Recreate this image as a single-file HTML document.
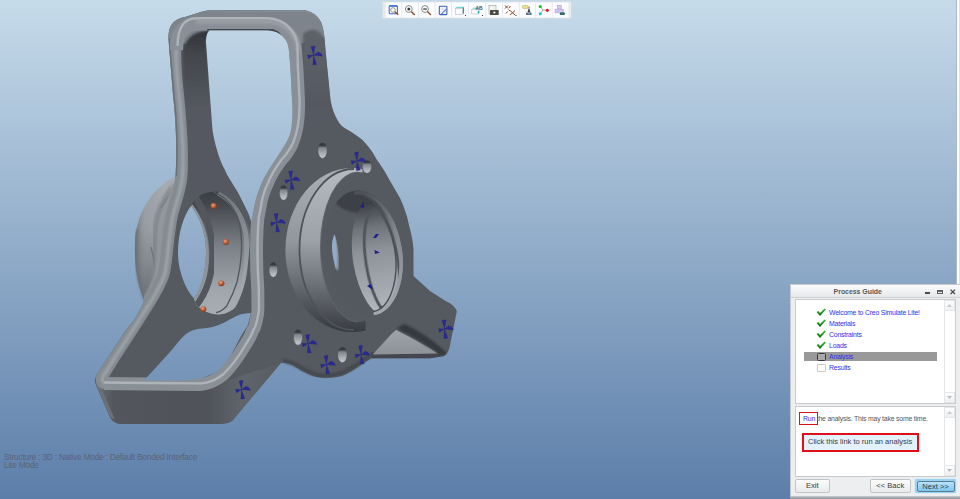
<!DOCTYPE html>
<html><head><meta charset="utf-8">
<style>
html,body{margin:0;padding:0;width:960px;height:499px;overflow:hidden;}
body{position:relative;background:linear-gradient(to bottom,#c6dbea 0%,#91acc9 50%,#5c7ea9 100%);font-family:"Liberation Sans",sans-serif;}
.a{position:absolute;}
#model{position:absolute;left:0;top:0;}
/* toolbar */
#tb{left:383px;top:2px;width:188px;height:16px;background:#f4f6f8;border:1px solid #d8dde2;box-sizing:border-box;}
.tsep{position:absolute;top:1px;width:1px;height:14px;background:#dfe3e7;}
/* status */
.st{color:#5b6478;font-size:8.4px;line-height:8px;left:4px;letter-spacing:-0.22px;}
/* dialog */
#dlg{left:790px;top:284px;width:171px;height:213px;background:#eceef0;border:1px solid #c4c8cc;box-sizing:border-box;}
#title{left:791px;top:285px;width:169px;height:12px;background:linear-gradient(#fbfbfb,#e6e8ea);border-bottom:1px solid #cfd2d5;}
.pnl{background:#fff;border:1px solid #c9cccf;box-sizing:border-box;}
.sb{background:#fff;border-left:1px solid #e3e5e7;box-sizing:border-box;}
.sbb{background:linear-gradient(#fdfdfd,#eef0f2);border:1px solid #e4e6e8;box-sizing:border-box;}
.lnk{color:#2f2ff0;font-size:6.9px;line-height:9px;white-space:nowrap;letter-spacing:-0.2px;}
.btn{border:1px solid #c2c5c8;border-radius:2px;background:linear-gradient(#fbfbfb,#e8eaec);box-sizing:border-box;font-size:7.6px;color:#3a3a3a;text-align:center;line-height:12px;}
</style></head>
<body>
<svg id="model" width="960" height="499" viewBox="0 0 960 499">
<!-- MODEL -->
<defs>
<linearGradient id="bgg" gradientUnits="userSpaceOnUse" x1="0" y1="0" x2="0" y2="499">
<stop offset="0" stop-color="#c6dbea"/><stop offset="0.5" stop-color="#91acc9"/><stop offset="1" stop-color="#5c7ea9"/></linearGradient>
<linearGradient id="hub" gradientUnits="userSpaceOnUse" x1="0" y1="177" x2="0" y2="306">
<stop offset="0" stop-color="#a6acb2"/><stop offset="0.4" stop-color="#9ea4aa"/><stop offset="0.68" stop-color="#83888e"/><stop offset="1" stop-color="#5c6167"/></linearGradient>
<linearGradient id="hubx" gradientUnits="userSpaceOnUse" x1="134" y1="0" x2="165" y2="0">
<stop offset="0" stop-color="#5f646a" stop-opacity="0.8"/><stop offset="0.35" stop-color="#80858b" stop-opacity="0.25"/><stop offset="1" stop-color="#80858b" stop-opacity="0"/></linearGradient>
<linearGradient id="topband" gradientUnits="userSpaceOnUse" x1="0" y1="16.5" x2="0" y2="31">
<stop offset="0" stop-color="#9aa1a8"/><stop offset="0.17" stop-color="#a9b0b7"/><stop offset="0.45" stop-color="#9097a0"/><stop offset="0.78" stop-color="#7b8189"/><stop offset="0.9" stop-color="#474a50"/><stop offset="1" stop-color="#3d4045"/></linearGradient>
<linearGradient id="lbore" gradientUnits="userSpaceOnUse" x1="0" y1="192" x2="0" y2="315">
<stop offset="0" stop-color="#3a3d42"/><stop offset="0.1" stop-color="#44474c"/><stop offset="0.43" stop-color="#7a7f85"/><stop offset="0.8" stop-color="#a0a6ac"/><stop offset="1" stop-color="#a8aeb4"/></linearGradient>
<linearGradient id="b1" gradientUnits="userSpaceOnUse" x1="0" y1="168" x2="0" y2="334">
<stop offset="0" stop-color="#a9afb5"/><stop offset="0.45" stop-color="#90969c"/><stop offset="0.72" stop-color="#62676d"/><stop offset="1" stop-color="#34373c"/></linearGradient>
<linearGradient id="b2" gradientUnits="userSpaceOnUse" x1="0" y1="168" x2="0" y2="330">
<stop offset="0" stop-color="#b5bbc1"/><stop offset="0.45" stop-color="#9ba1a7"/><stop offset="0.72" stop-color="#6c7177"/><stop offset="1" stop-color="#3a3d42"/></linearGradient>
<linearGradient id="rbore" x1="0" y1="0" x2="0" y2="1">
<stop offset="0" stop-color="#3a3d42"/><stop offset="0.22" stop-color="#6f747a"/><stop offset="0.42" stop-color="#8c9298"/><stop offset="1" stop-color="#b5bbc1"/></linearGradient>
<linearGradient id="tri" gradientUnits="userSpaceOnUse" x1="0" y1="330" x2="0" y2="352">
<stop offset="0" stop-color="#9ea4aa"/><stop offset="1" stop-color="#8e949a"/></linearGradient>
<linearGradient id="front" gradientUnits="userSpaceOnUse" x1="95" y1="0" x2="280" y2="0">
<stop offset="0" stop-color="#6b7076"/><stop offset="0.1" stop-color="#53575d"/><stop offset="0.6" stop-color="#4f5359"/><stop offset="0.8" stop-color="#60656b"/><stop offset="1" stop-color="#585c62"/></linearGradient>
<linearGradient id="holeg" x1="0" y1="0" x2="0" y2="1">
<stop offset="0" stop-color="#2f3236"/><stop offset="0.18" stop-color="#3a3d42"/><stop offset="0.32" stop-color="#80858b"/><stop offset="0.7" stop-color="#aab0b5"/><stop offset="1" stop-color="#c5cacf"/></linearGradient>
<radialGradient id="dot" cx="0.4" cy="0.35" r="0.65">
<stop offset="0" stop-color="#eea27a"/><stop offset="0.5" stop-color="#c2643a"/><stop offset="1" stop-color="#7e3a1e"/></radialGradient>
<clipPath id="sil2"><path d="M207,10.5 C209,10.2 210,10 212,10 L302.5,10 C310,10.5 317,14 321,22 C323,27 324,32 324.5,38 L325.7,52 L330.5,100 C332,108 334,114 337.5,120 C340,125 344,128 348,130 C353,133 358,136 362.5,140 C369,147 373,152 377,160 C382,167 386,173 389.5,180 L400,198 C404,207 407,215 409,225 C411,233 413,241 413.5,249 L413.5,276 L430,291 L444,300 C450,303 455,306 456.8,311.2 L449.8,346.3 C448.5,352 446.5,355 444,356 L430,358.2 L371.2,358.2 C366,362 362,364 358.75,366.25 C352,371 346,375 340,376.25 C333,378 327,378.5 321.25,378.1 C314,377 308,374 302.5,371.25 C297,368 293,364.5 290,363.75 C287,363 284,362.8 281.25,362.5 L235,417.5 C232,422 228,424 217,424 L122,424 C116,424 112,421 110,417 L96,385 C94.5,381 95,378 97,374.5 L106.2,360 L126,330 C130,325 132,322 134.4,320 C138,314 141,307 144.7,301 C150,294 157,285 162,276 C165,265 166,255 166.5,250 C167,235 168,225 170,218 C173,200 175,190 175.5,177 C177,150 176,120 173,95 L168.4,38.75 C168.5,30 170,25 175,21 C178,19 181,17.5 185,17 C192,15 200,12 207,10.5 Z"/><path d="M178,176 C170,179 165,182 161,186 C155,191 152,195 148.4,200.5 C144,207 141,213 139.4,218.5 C137,226 135,233 135,242 C134.5,257 135.5,270 138,281 C140,290 143,298 147,306 L185,306 L185,176 Z"/></clipPath><clipPath id="sil"><path d="M207,10.5 C209,10.2 210,10 212,10 L302.5,10 C310,10.5 317,14 321,22 C323,27 324,32 324.5,38 L325.7,52 L330.5,100 C332,108 334,114 337.5,120 C340,125 344,128 348,130 C353,133 358,136 362.5,140 C369,147 373,152 377,160 C382,167 386,173 389.5,180 L400,198 C404,207 407,215 409,225 C411,233 413,241 413.5,249 L413.5,276 L430,291 L444,300 C450,303 455,306 456.8,311.2 L449.8,346.3 C448.5,352 446.5,355 444,356 L430,358.2 L371.2,358.2 C366,362 362,364 358.75,366.25 C352,371 346,375 340,376.25 C333,378 327,378.5 321.25,378.1 C314,377 308,374 302.5,371.25 C297,368 293,364.5 290,363.75 C287,363 284,362.8 281.25,362.5 L235,417.5 C232,422 228,424 217,424 L122,424 C116,424 112,421 110,417 L96,385 C94.5,381 95,378 97,374.5 L106.2,360 L126,330 C130,325 132,322 134.4,320 C138,314 141,307 144.7,301 C150,294 157,285 162,276 C165,265 166,255 166.5,250 C167,235 168,225 170,218 C173,200 175,190 175.5,177 C177,150 176,120 173,95 L168.4,38.75 C168.5,30 170,25 175,21 C178,19 181,17.5 185,17 C192,15 200,12 207,10.5 Z"/></clipPath>
<filter id="soft" x="-5%" y="-5%" width="110%" height="110%"><feGaussianBlur stdDeviation="1.1"/></filter>
<filter id="soft2" x="-5%" y="-5%" width="110%" height="110%"><feGaussianBlur stdDeviation="0.6"/></filter>
</defs>
<path fill="url(#hub)" d="M178,176 C170,179 165,182 161,186 C155,191 152,195 148.4,200.5 C144,207 141,213 139.4,218.5 C137,226 135,233 135,242 C134.5,257 135.5,270 138,281 C140,290 143,298 147,306 L185,306 L185,176 Z"/>
<path fill="url(#hubx)" d="M178,176 C170,179 165,182 161,186 C155,191 152,195 148.4,200.5 C144,207 141,213 139.4,218.5 C137,226 135,233 135,242 C134.5,257 135.5,270 138,281 C140,290 143,298 147,306 L185,306 L185,176 Z"/>
<path fill="none" stroke="#7c8187" stroke-width="6" filter="url(#soft)" d="M172,188 C165,198 158,210 156,225 C154,240 154,255 157,270 C159,280 160,288 158,296" opacity="0.7"/>
<path fill="none" stroke="#6f747a" stroke-width="1.3" filter="url(#soft2)" d="M151,247 C153,256 155,265 157,275"/>
<path fill="none" stroke="#72777d" stroke-width="1.3" filter="url(#soft2)" d="M175,186 C170,194 166,200 161,208"/>
<path fill="none" stroke="#6a6f75" stroke-width="3" filter="url(#soft)" d="M137,230 C135,250 136,268 140,285 C142,293 144,299 147,305" opacity="0.6"/>
<path fill="#555960" d="M207,10.5 C209,10.2 210,10 212,10 L302.5,10 C310,10.5 317,14 321,22 C323,27 324,32 324.5,38 L325.7,52 L330.5,100 C332,108 334,114 337.5,120 C340,125 344,128 348,130 C353,133 358,136 362.5,140 C369,147 373,152 377,160 C382,167 386,173 389.5,180 L400,198 C404,207 407,215 409,225 C411,233 413,241 413.5,249 L413.5,276 L430,291 L444,300 C450,303 455,306 456.8,311.2 L449.8,346.3 C448.5,352 446.5,355 444,356 L430,358.2 L371.2,358.2 C366,362 362,364 358.75,366.25 C352,371 346,375 340,376.25 C333,378 327,378.5 321.25,378.1 C314,377 308,374 302.5,371.25 C297,368 293,364.5 290,363.75 C287,363 284,362.8 281.25,362.5 L235,417.5 C232,422 228,424 217,424 L122,424 C116,424 112,421 110,417 L96,385 C94.5,381 95,378 97,374.5 L106.2,360 L126,330 C130,325 132,322 134.4,320 C138,314 141,307 144.7,301 C150,294 157,285 162,276 C165,265 166,255 166.5,250 C167,235 168,225 170,218 C173,200 175,190 175.5,177 C177,150 176,120 173,95 L168.4,38.75 C168.5,30 170,25 175,21 C178,19 181,17.5 185,17 C192,15 200,12 207,10.5 Z"/>
<g clip-path="url(#sil)">
<path fill="#7d848c" d="M168.4,38.75 C168.5,30 170,25 175,21 C178,19 181,17.5 185,17 C192,15 200,12 207,10.5 L302.5,10 C310,10.5 317,14 321,22 C323,27 324,32 324.5,38 L300,44 L186,44 Z"/>
<path fill="none" stroke="#8a9199" stroke-width="1.2" d="M207,11 L302,11 C310,11.5 316,15 319,20"/>
<linearGradient id="rfg" gradientUnits="userSpaceOnUse" x1="0" y1="30" x2="0" y2="105"><stop offset="0" stop-color="#5e636a"/><stop offset="1" stop-color="#555960"/></linearGradient>
<path fill="url(#rfg)" filter="url(#soft)" d="M303,34 C312,26 321,30 324.5,40 L331,106 L303,106 Z"/>
<linearGradient id="wallg" gradientUnits="userSpaceOnUse" x1="0" y1="30" x2="0" y2="110"><stop offset="0" stop-color="#303338"/><stop offset="0.3" stop-color="#43464c"/><stop offset="1" stop-color="#555960"/></linearGradient>
<path fill="url(#wallg)" filter="url(#soft)" d="M183,56 C183,40 192,31 209.7,30.5 L206,42.5 L209.5,90 L212.5,130 L217,150 L225,170 L238,192.5 L187,195 Z"/>
<path fill="url(#front)" d="M95,382 L100,387.5 L197.5,390 L222.5,382.5 L250,373 L283,362 L290,362 L237,422 Q230,426 217,426 L122,426 Q112,425 108,417 Z"/>
<path fill="#6a6f75" filter="url(#soft2)" d="M95,382 L101,387 L115,420 L110,417 Z"/>
</g>
<path fill="none" stroke="#8f959b" stroke-width="10" filter="url(#soft)" d="M177,184 C174,198 168,210 165.5,222 C163.5,234 162.5,244 161.5,252 C160.5,264 159.5,272 157.5,280 C154.5,288 150.5,296 146,303" clip-path="url(#sil2)"/>
<path fill="none" stroke="#858b92" stroke-width="12" stroke-linejoin="round" filter="url(#soft2)" d="M200,23 C186,23 176.5,29 175.3,45 C174.8,60 175.5,75 178,95 C180,115 182,140 182,160 C182,170 181.5,176 181,180 C179,195 173,208 171,220 C169,232 168,242 167,250 C166,262 165,270 163,276 C160,284 155,293 150.7,300 L131.75,330 L112.2,360 L103,375 C100.5,380 101.5,383 106,383.5" clip-path="url(#sil2)"/>
<path fill="none" stroke="#9ea4aa" stroke-width="3.2" stroke-linejoin="round" filter="url(#soft)" d="M200,23 C186,23 176.5,29 175.3,45 C174.8,60 175.5,75 178,95 C180,115 182,140 182,160 C182,170 181.5,176 181,180 C179,195 173,208 171,220 C169,232 168,242 167,250 C166,262 165,270 163,276 C160,284 155,293 150.7,300 L131.75,330 L112.2,360 L103,375 C100.5,380 101.5,383 106,383.5" transform="translate(1,0)" clip-path="url(#sil2)"/>
<path fill="none" stroke="#6b7077" stroke-width="1.6" filter="url(#soft2)" d="M169.2,40 L173.8,95 C176.8,120 177.8,150 176.3,176" clip-path="url(#sil2)"/>
<g clip-path="url(#sil)">
<path fill="none" stroke="#898f96" stroke-width="13" stroke-linejoin="round" d="M176.5,50 C176.5,33 184,24 200,24 L268,24 A27.5,27.5 0 0 1 295.5,51.5 L296.9,68 L298.5,100 C299,115 297,132 292,144 C288,152 284,157 281,160 C275,168 270,176 267.5,183 C263,192 261,199 260,207 C258,215 257,220 257,230 C256,250 256.5,270 257.8,290 C258,305 258,312 257.7,313 C256,322 254.5,329 252.9,330 C250,338 247,342 245,345 C238,357 232,366 222.5,375 C215,381 208,384 200,384.4 L150,384 L104,383.5" filter="url(#soft2)"/>
<path fill="none" stroke="#979da5" stroke-width="5" d="M196,21.50 L268,21.50 A30.00,30.00 0 0 1 298.00,51.5" filter="url(#soft)"/>
<path fill="none" stroke="#adb3b9" stroke-width="2.4" stroke-linejoin="round" d="M177.5,46 C177.5,30 183,18.3 196,18.3 L268,18.3 A30.2,30.2 0 0 1 297.5,50 L297.9,67 L299.5,99 C300,114 298,131 293,143 C289,151 285,156 282,159 C276,167 271,175 268.5,182 C264,191 262,198 261,206 C259,214 258,219 258,229 C257,249 257.5,269 258.8,289 C259,304 259,311 258.7,312 C257,321 255.5,328 253.9,329 C251,337 248,341 246,344 C239,356 233,365 223.5,374 C216,380 209,383 201,383.4 L150,383 L104,382.5" filter="url(#soft2)"/>
<path fill="none" stroke="#43464b" stroke-width="2.6" d="M207,29.3 L266,29.3 C272,29.5 277,31.5 280,35" filter="url(#soft2)"/>
</g>
<path fill="url(#bgg)" d="M209.7,30.5 L268,30.5 A21,21 0 0 1 289,51.5 L290.4,68 L292,100 C292.5,110 292.5,120 291,130 C290,134 289,137 287.5,140 C283,148 279,154 275,160 C270,168 265,175 261.3,183.4 C258,191 255.5,199 254,207 C253,212 252,217 251.2,222 C250,218 249,214 247,210.5 L238,192.5 L229,178 C227,175 226,172.5 225,170 C221,163 219,157 217,150 C215,143 213.5,137 212.5,130 L209.5,90 L206,42.5 C206,37 207,32 209.7,30.5 Z"/>
<path fill="url(#lbore)" d="M191,206 C192,203 194,201 195.8,199.4 C200,195 205,192.5 209,192.2 L216.3,191.6 C222,192 228,197 233.1,201.8 C240,208 245,215 247.6,223.5 C249.5,229 250.6,235 250.4,240 C250,246 249.5,249 249,252 C248.5,258 248,264 247.2,270 C246,282 241,298 235.2,307.3 C231,312 224,314.5 218.3,314.5 C210,314.5 201,310 196,305 L194,298.5 C201,288 206,272 206,252 C206,232 199,216 191,206 Z"/>
<clipPath id="lbc"><path d="M191,206 C192,203 194,201 195.8,199.4 C200,195 205,192.5 209,192.2 L216.3,191.6 C222,192 228,197 233.1,201.8 C240,208 245,215 247.6,223.5 C249.5,229 250.6,235 250.4,240 C250,246 249.5,249 249,252 C248.5,258 248,264 247.2,270 C246,282 241,298 235.2,307.3 C231,312 224,314.5 218.3,314.5 C210,314.5 201,310 196,305 L194,298.5 C201,288 206,272 206,252 C206,232 199,216 191,206 Z"/></clipPath>
<g clip-path="url(#lbc)">
<path fill="none" stroke="#a3a9af" stroke-width="5" filter="url(#soft2)" d="M218,193 C232,200 243,215 246,235 C248,255 246,285 238,302 C233,310 226,314 218,315" opacity="0.55"/>
<path fill="none" stroke="#53575d" stroke-width="6.5" filter="url(#soft2)" d="M195,197 C205,211 212,231 212.5,251 C213,272 207,292 196,306"/>
<path fill="none" stroke="#8d9399" stroke-width="2.2" d="M191.5,205 C199.8,216 207.2,232 207.2,252 C207.2,272 202,289 195,299.5"/>
<path fill="none" stroke="#52565c" stroke-width="1.3" d="M212.7,191.6 C220,195 225,198 227,200.6 C233,207 236,212 238,218.7 C240.5,227 241.6,236 241.6,245 C241.6,258 240,270 237,282 C234,292 230,300 226.7,306 C223,310 220,312 216,312.7"/>
</g>
<path fill="url(#bgg)" d="M191,206 C199,216 206,232 206,252 C206,272 201,288 194,298.5 C186,290 178,272 178,253 C178,232 184,215 191,206 Z"/>
<path fill="url(#bgg)" d="M144,380.4 L180,380.4 C190,380 197,379 202,378 C208,376 213,374 217.5,371.6 C223,366 227,361 231,355 L238.8,340.3 C242,334 245,330 247.3,326.3 C249,321 250.5,316 250.8,313 C246,313 242,314 238.8,315 C234,317 231,319 227.6,320.7 C223,323 219,325 215,326.3 C210,328 206,328 202,328.6 C196,329 190,331 186,334 C180,339 176,345 170,352 Z"/>
<clipPath id="bossc"><path d="M250,140 L362,140 L366,345 L250,345 Z"/></clipPath>
<g clip-path="url(#bossc)">
<path fill="url(#b1)" fill-rule="evenodd" d="M352,168 A66.6,82 0 1 0 352,332 A66.6,82 0 1 0 352,168 Z M354,169 A54.5,80.5 0 1 0 354,330 A54.5,80.5 0 1 0 354,169 Z"/>
<path fill="url(#b2)" fill-rule="evenodd" d="M354,169 A54.5,80.5 0 1 0 354,330 A54.5,80.5 0 1 0 354,169 Z M358,172 A37.5,75 0 1 0 358,322 A37.5,75 0 1 0 358,172 Z"/>
<path fill="none" stroke="#4f5359" stroke-width="1.8" d="M354,169 A54.5,80.5 0 0 0 354,330"/>
<path fill="none" stroke="#60656b" stroke-width="1" d="M358,172 A37.5,75 0 0 0 358,322"/>
</g>
<clipPath id="e1c"><ellipse cx="0" cy="0" rx="38" ry="63" transform="translate(364,253) rotate(-9)"/></clipPath>
<ellipse cx="0" cy="0" rx="38" ry="63" transform="translate(364,253) rotate(-9)" fill="#54585f"/>
<g clip-path="url(#e1c)">
<ellipse cx="368" cy="198" rx="34" ry="16" fill="#3e4146" filter="url(#soft)"/>
<ellipse cx="0" cy="0" rx="26" ry="58" transform="translate(379,259) rotate(-9)" fill="url(#rbore)"/>
<ellipse cx="0" cy="0" rx="16" ry="52" transform="translate(382,262) rotate(-9)" fill="none" stroke="#50545a" stroke-width="2.8" filter="url(#soft2)"/>
<linearGradient id="rimg" gradientUnits="userSpaceOnUse" x1="0" y1="190" x2="0" y2="316"><stop offset="0" stop-color="#4a4e54"/><stop offset="0.35" stop-color="#80868c"/><stop offset="1" stop-color="#a2a8ae"/></linearGradient>
<path fill="none" stroke="url(#rimg)" stroke-width="7" d="M364,190 A38,63 0 0 1 364,316" transform="rotate(-9 364 253)"/>
<path fill="none" stroke="#4a4e54" stroke-width="1.4" d="M363.5,193.5 A31.5,59.5 0 0 1 363.5,312.5" transform="rotate(-9 363.5 253)"/>
</g>
<path fill="#8d9399" d="M334.8,234.4 C338,244 339.6,258 338.2,271.3 C335,264 332,252 332.2,246 C332.5,240 333.5,237 334.8,234.4 Z"/>
<path fill="url(#bgg)" d="M334.6,234.4 C336.8,244 337.2,258 336.5,271.3 C334,264 331.8,252 332,246 C332.3,240 333.3,237 334.6,234.4 Z"/>
<path fill="#44474d" d="M371.2,352 L440,352 L446,352 L444,356 L430,358.2 L371.2,358.2 Z"/>
<path fill="url(#tri)" d="M396.5,330 C394.5,331 393,332.5 391,334.5 L372.6,354.5 L438,353.5 C425,345 408,336 396.5,330 Z"/>
<path fill="#36393e" filter="url(#soft)" d="M397,328.5 C412,336 428,346 440,354 L447,353.5 C437,343 420,331 404,324 Z"/>
<path fill="none" stroke="#44484e" stroke-width="4" filter="url(#soft)" d="M283,360.5 C287,361 292,362 302.5,368.5 C308,371.5 314,374.5 321.25,375.5 C327,376 333,375.5 340,373.5 C346,371.5 352,368 358.75,363.5 C362,361 366,358 371,355"/>
<ellipse cx="322.5" cy="150.6" rx="4.65" ry="7.8" fill="url(#holeg)" stroke="#4a4e54" stroke-width="0.5"/>
<ellipse cx="367" cy="166.7" rx="4.65" ry="6.5" fill="url(#holeg)" stroke="#4a4e54" stroke-width="0.5"/>
<ellipse cx="283.6" cy="192.8" rx="4.3" ry="7.5" fill="url(#holeg)" stroke="#4a4e54" stroke-width="0.5"/>
<ellipse cx="273.3" cy="269.8" rx="4.3" ry="7.5" fill="url(#holeg)" stroke="#4a4e54" stroke-width="0.5"/>
<ellipse cx="298" cy="337.4" rx="4.5" ry="7.8" fill="url(#holeg)" stroke="#4a4e54" stroke-width="0.5"/>
<ellipse cx="342.4" cy="354.8" rx="4.7" ry="7.85" fill="url(#holeg)" stroke="#4a4e54" stroke-width="0.5"/>
<ellipse cx="213.7" cy="206" rx="3.1" ry="2.9" fill="url(#dot)"/>
<ellipse cx="225.8" cy="242" rx="3.1" ry="2.9" fill="url(#dot)"/>
<ellipse cx="221.3" cy="283.3" rx="3.1" ry="2.9" fill="url(#dot)"/>
<ellipse cx="203.3" cy="309.1" rx="3.1" ry="2.9" fill="url(#dot)"/>
<g transform="translate(313.5,55.3) rotate(0) scale(1.0)" fill="#2a2a92" stroke="#1c1b6a" stroke-width="0.2"><path d="M0,0 L-2.5,-8.6 L1.6,-9.2 Z"/><path d="M0,0 L4.4,-3.2 Q7.8,-2.6 9,1.0 Z"/><path d="M0,0 L-0.7,9.6 L3.3,9.2 Z"/><path d="M0,0 L-5.9,-0.3 L-5.2,3.4 Z"/></g>
<g transform="translate(357,161) rotate(0) scale(1.0)" fill="#2a2a92" stroke="#1c1b6a" stroke-width="0.2"><path d="M0,0 L-2.5,-8.6 L1.6,-9.2 Z"/><path d="M0,0 L4.4,-3.2 Q7.8,-2.6 9,1.0 Z"/><path d="M0,0 L-0.7,9.6 L3.3,9.2 Z"/><path d="M0,0 L-5.9,-0.3 L-5.2,3.4 Z"/></g>
<g transform="translate(291,180) rotate(0) scale(1.0)" fill="#2a2a92" stroke="#1c1b6a" stroke-width="0.2"><path d="M0,0 L-2.5,-8.6 L1.6,-9.2 Z"/><path d="M0,0 L4.4,-3.2 Q7.8,-2.6 9,1.0 Z"/><path d="M0,0 L-0.7,9.6 L3.3,9.2 Z"/><path d="M0,0 L-5.9,-0.3 L-5.2,3.4 Z"/></g>
<g transform="translate(276.5,222.5) rotate(0) scale(1.0)" fill="#2a2a92" stroke="#1c1b6a" stroke-width="0.2"><path d="M0,0 L-2.5,-8.6 L1.6,-9.2 Z"/><path d="M0,0 L4.4,-3.2 Q7.8,-2.6 9,1.0 Z"/><path d="M0,0 L-0.7,9.6 L3.3,9.2 Z"/><path d="M0,0 L-5.9,-0.3 L-5.2,3.4 Z"/></g>
<g transform="translate(308,343.5) rotate(0) scale(1.0)" fill="#2a2a92" stroke="#1c1b6a" stroke-width="0.2"><path d="M0,0 L-2.5,-8.6 L1.6,-9.2 Z"/><path d="M0,0 L4.4,-3.2 Q7.8,-2.6 9,1.0 Z"/><path d="M0,0 L-0.7,9.6 L3.3,9.2 Z"/><path d="M0,0 L-5.9,-0.3 L-5.2,3.4 Z"/></g>
<g transform="translate(326.5,364.5) rotate(0) scale(1.0)" fill="#2a2a92" stroke="#1c1b6a" stroke-width="0.2"><path d="M0,0 L-2.5,-8.6 L1.6,-9.2 Z"/><path d="M0,0 L4.4,-3.2 Q7.8,-2.6 9,1.0 Z"/><path d="M0,0 L-0.7,9.6 L3.3,9.2 Z"/><path d="M0,0 L-5.9,-0.3 L-5.2,3.4 Z"/></g>
<g transform="translate(361,354.5) rotate(0) scale(1.0)" fill="#2a2a92" stroke="#1c1b6a" stroke-width="0.2"><path d="M0,0 L-2.5,-8.6 L1.6,-9.2 Z"/><path d="M0,0 L4.4,-3.2 Q7.8,-2.6 9,1.0 Z"/><path d="M0,0 L-0.7,9.6 L3.3,9.2 Z"/><path d="M0,0 L-5.9,-0.3 L-5.2,3.4 Z"/></g>
<g transform="translate(444.5,329) rotate(0) scale(1.0)" fill="#2a2a92" stroke="#1c1b6a" stroke-width="0.2"><path d="M0,0 L-2.5,-8.6 L1.6,-9.2 Z"/><path d="M0,0 L4.4,-3.2 Q7.8,-2.6 9,1.0 Z"/><path d="M0,0 L-0.7,9.6 L3.3,9.2 Z"/><path d="M0,0 L-5.9,-0.3 L-5.2,3.4 Z"/></g>
<g transform="translate(241.5,389.5) rotate(0) scale(1.0)" fill="#2a2a92" stroke="#1c1b6a" stroke-width="0.2"><path d="M0,0 L-2.5,-8.6 L1.6,-9.2 Z"/><path d="M0,0 L4.4,-3.2 Q7.8,-2.6 9,1.0 Z"/><path d="M0,0 L-0.7,9.6 L3.3,9.2 Z"/><path d="M0,0 L-5.9,-0.3 L-5.2,3.4 Z"/></g>
<g fill="#1f1f8a"><path d="M360,207 L364,202 L364,208 Z"/><path d="M373,238 L376,234 L379,234 L376,238 Z"/><path d="M374.5,250 L380,252.5 L375,254 Z"/><path d="M367,286 L371,284 L373,290 Z"/></g>
</svg>

<!-- toolbar -->
<svg class="a" style="left:0;top:0;" width="580" height="22" viewBox="0 0 580 22">
<rect x="382.5" y="1.9" width="188.5" height="16.2" fill="#fbfcfd" stroke="#d5dce4" stroke-width="0.8"/>
<rect x="383" y="2.3" width="2.8" height="15.4" fill="#e6e9ec"/>
<g fill="#e3e7eb">
<rect x="401.3" y="2.5" width="0.9" height="15"/><rect x="418" y="2.5" width="0.9" height="15"/><rect x="434.6" y="2.5" width="0.9" height="15"/>
<rect x="451.1" y="2.5" width="0.9" height="15"/><rect x="468.2" y="2.5" width="0.9" height="15"/><rect x="485.2" y="2.5" width="0.9" height="15"/>
<rect x="502" y="2.5" width="0.9" height="15"/><rect x="518.8" y="2.5" width="0.9" height="15"/><rect x="535.2" y="2.5" width="0.9" height="15"/>
<rect x="551.7" y="2.5" width="0.9" height="15"/><rect x="568.5" y="2.5" width="1.4" height="15"/>
</g>
<!-- 1 refit -->
<rect x="389.2" y="5.7" width="8.2" height="8" rx="1" fill="#fff" stroke="#3f6fcf" stroke-width="1.1"/>
<rect x="389.2" y="5.4" width="8.2" height="1.4" fill="#3f6fcf"/>
<circle cx="393" cy="10" r="2.3" fill="none" stroke="#8a8a80" stroke-width="0.9"/>
<path d="M394.8,11.8 L398.3,14.8" stroke="#8b4a2a" stroke-width="1.4"/>
<!-- 2 zoom in -->
<circle cx="408.8" cy="9" r="3.4" fill="#fff" stroke="#6a6a6a" stroke-width="0.8"/>
<circle cx="408.8" cy="9" r="1.5" fill="#3a3a3a"/>
<path d="M411.2,11.5 L414.7,14.9" stroke="#8b4a2a" stroke-width="1.4"/>
<!-- 3 zoom out -->
<circle cx="425" cy="9" r="3.4" fill="#fff" stroke="#6a6a6a" stroke-width="0.8"/>
<rect x="423.2" y="8.4" width="3.6" height="1.3" fill="#3a3a3a"/>
<path d="M427.4,11.5 L430.9,14.9" stroke="#8b4a2a" stroke-width="1.4"/>
<!-- 4 repaint -->
<rect x="439.3" y="6.2" width="7.6" height="8.4" rx="0.8" fill="#eef3fb" stroke="#3b62c2" stroke-width="1.1"/>
<path d="M441.5,14 L446.3,9.2" stroke="#2a3a9a" stroke-width="1"/>
<path d="M441.8,8 Q443,11 445.5,9" stroke="#b8c8e8" stroke-width="0.6" fill="none"/>
<!-- 5 cube -->
<path d="M455.3,8.3 L456.8,6.8 L464,6.8 L462.5,8.3 Z" fill="#6fd9dc"/>
<path d="M462.5,8.3 L464,6.8 L464,13.2 L462.5,14.6 Z" fill="#1aa3a8"/>
<rect x="455.3" y="8.3" width="7.2" height="6.3" fill="#fafafa" stroke="#b0b0b0" stroke-width="0.5"/>
<rect x="465" y="15" width="1" height="1" fill="#333"/>
<!-- 6 named view -->
<path d="M471.8,9.2 L473.4,7.6 L479,7.6 L477.5,9.2 Z" fill="#8fe2e4"/>
<rect x="471.8" y="9.2" width="6.2" height="4.8" fill="#fafafa" stroke="#b0b0b0" stroke-width="0.5"/>
<path d="M478,11.3 L479.3,10.3 L479.3,13 L478,14 Z" fill="#1aa3a8"/>
<text x="475.5" y="9.5" font-family="Liberation Sans" font-size="5" font-weight="bold" fill="#555">AB</text>
<rect x="482" y="15" width="1" height="1" fill="#333"/>
<!-- 7 display -->
<rect x="489" y="5.5" width="7" height="8.5" fill="#f2f2f2" stroke="#9a9a9a" stroke-width="0.6"/>
<rect x="490" y="10" width="8.7" height="5" rx="0.6" fill="#4a4a44"/>
<circle cx="494.4" cy="12.5" r="1.1" fill="#fff"/>
<!-- 8 -->
<g stroke="#9a4a22" stroke-width="1" fill="none">
<path d="M505,5.5 L508,8.5 M508,5.5 L505,8.5"/><path d="M510.5,6 L509,8"/><path d="M506,13.5 L507.5,11.5"/>
<path d="M510,10.5 L515,15 M515,10.5 L510,15"/><path d="M508.5,9.5 L510,11"/>
</g>
<rect x="515.5" y="15" width="1" height="1" fill="#333"/>
<!-- 9 -->
<rect x="522.4" y="5.6" width="5.8" height="2.8" rx="0.8" fill="#e8e490" stroke="#a8a458" stroke-width="0.5"/>
<path d="M528.5,7 L530,7.5 M529,8.5 L528,12 L530,12 Z" stroke="#333" stroke-width="0.6" fill="#333"/>
<rect x="526" y="12.6" width="5.5" height="2.4" rx="0.6" fill="#596a7a"/>
<rect x="527.5" y="13.2" width="2.5" height="1.2" fill="#6fa8e8"/>
<!-- 10 -->
<path d="M540.2,6.6 L543,10 L547.3,10.2 M543,10 L540.2,13.7" stroke="#9aa0a6" stroke-width="0.9" fill="none"/>
<circle cx="540.2" cy="6.6" r="1.5" fill="#18b818"/>
<circle cx="547.3" cy="10.2" r="1.5" fill="#e01010"/>
<circle cx="540.2" cy="13.7" r="1.5" fill="#18c0d0"/>
<!-- 11 -->
<rect x="557.6" y="5.3" width="3.6" height="3.6" fill="#d8c8f4" stroke="#a890d8" stroke-width="0.5"/>
<rect x="555" y="9.2" width="3.6" height="3.6" fill="#d8c8f4" stroke="#a890d8" stroke-width="0.5"/>
<rect x="559.8" y="9.2" width="3.6" height="3.6" fill="#d8c8f4" stroke="#a890d8" stroke-width="0.5"/>
<rect x="559.8" y="12.4" width="5" height="2.6" rx="0.8" fill="#2f5f5a"/>
<circle cx="562.3" cy="13.2" r="1" fill="#1a8a7a"/>
</svg>

<!-- status -->
<div class="a st" style="top:453px;">Structure : 3D : Native Mode : Default Bonded Interface</div>
<div class="a st" style="top:461px;">Lite Mode</div>

<!-- right white strip -->
<div class="a" style="left:956px;top:0;width:1px;height:284px;background:#aab8c8;"></div>
<div class="a" style="left:957px;top:0;width:2px;height:284px;background:#fdfdfd;"></div>
<div class="a" style="left:959px;top:0;width:1px;height:284px;background:#dde3ea;"></div>

<!-- dialog -->
<div id="dlg" class="a"></div>
<div id="title" class="a"></div>
<div class="a" style="left:807.75px;top:286px;width:100px;text-align:center;font-size:6.9px;font-weight:bold;color:#585858;line-height:12px;">Process Guide</div>
<!-- title buttons -->
<div class="a" style="left:925px;top:292px;width:5px;height:1.5px;background:#4a4a4a;"></div>
<div class="a" style="left:937px;top:289.7px;width:6px;height:4.5px;border:1px solid #606060;border-top-width:2px;box-sizing:border-box;"></div>
<svg class="a" style="left:949.5px;top:288.8px;" width="6" height="6" viewBox="0 0 6 6"><path d="M0.6,0.6 L5,5 M5,0.6 L0.6,5" stroke="#444" stroke-width="1.2"/></svg>
<!-- upper panel -->
<div class="a pnl" style="left:795px;top:299px;width:161px;height:105px;"></div>
<div class="a sb" style="left:944px;top:300px;width:11px;height:103px;"></div>
<div class="a sbb" style="left:944px;top:300px;width:11px;height:11px;"></div>
<div class="a sbb" style="left:944px;top:392px;width:11px;height:11px;"></div>
<svg class="a" style="left:946px;top:303px;" width="7" height="5"><path d="M1,4 L3.5,1 L6,4 Z" fill="#c8ccd0"/></svg>
<svg class="a" style="left:946px;top:395px;" width="7" height="5"><path d="M1,1 L3.5,4 L6,1 Z" fill="#b8bcc2"/></svg>
<!-- highlight bar -->
<div class="a" style="left:804px;top:351.5px;width:132.5px;height:9.5px;background:#999999;"></div>
<!-- checkmarks -->
<svg class="a" style="left:816px;top:308px;" width="11" height="60" viewBox="0 0 11 60">
<defs><linearGradient id="ck" x1="0" y1="0" x2="0" y2="1"><stop offset="0" stop-color="#3fbf3f"/><stop offset="1" stop-color="#0a6a0a"/></linearGradient></defs>
<g id="chk"><path d="M0.5,4 L2.5,3 L4,5 L8.5,0.5 L10,1.5 L4,8 Z" fill="url(#ck)"/></g>
<g transform="translate(0,11)"><path d="M0.5,4 L2.5,3 L4,5 L8.5,0.5 L10,1.5 L4,8 Z" fill="url(#ck)"/></g><g transform="translate(0,22)"><path d="M0.5,4 L2.5,3 L4,5 L8.5,0.5 L10,1.5 L4,8 Z" fill="url(#ck)"/></g><g transform="translate(0,33)"><path d="M0.5,4 L2.5,3 L4,5 L8.5,0.5 L10,1.5 L4,8 Z" fill="url(#ck)"/></g>
</svg>
<div class="a" style="left:816.5px;top:352.5px;width:9px;height:8px;border:1.3px solid #3a3a3a;border-radius:1.5px;background:#a8a8a8;box-sizing:border-box;"></div>
<div class="a" style="left:816.5px;top:363.5px;width:9px;height:8px;border:1px solid #c8c8c8;border-radius:1px;background:#fff;box-sizing:border-box;"></div>
<div class="a lnk" style="left:829px;top:308px;">Welcome to Creo Simulate Lite!</div>
<div class="a lnk" style="left:829px;top:319px;">Materials</div>
<div class="a lnk" style="left:829px;top:330px;">Constraints</div>
<div class="a lnk" style="left:829px;top:341px;">Loads</div>
<div class="a lnk" style="left:829px;top:352px;">Analysis</div>
<div class="a lnk" style="left:829px;top:363px;">Results</div>
<!-- lower panel -->
<div class="a pnl" style="left:795px;top:406px;width:161px;height:71px;"></div>
<div class="a sb" style="left:944px;top:407px;width:11px;height:69px;"></div>
<div class="a sbb" style="left:944px;top:407px;width:11px;height:11px;"></div>
<div class="a sbb" style="left:944px;top:465px;width:11px;height:11px;"></div>
<svg class="a" style="left:946px;top:410px;" width="7" height="5"><path d="M1,4 L3.5,1 L6,4 Z" fill="#c8ccd0"/></svg>
<svg class="a" style="left:946px;top:468px;" width="7" height="5"><path d="M1,1 L3.5,4 L6,1 Z" fill="#b8bcc2"/></svg>
<div class="a" style="left:798.5px;top:412px;width:19.5px;height:12.5px;border:1.5px solid #e0101a;box-sizing:border-box;"></div>
<div class="a" style="left:803px;top:413.5px;font-size:6.9px;line-height:9px;white-space:nowrap;color:#555;letter-spacing:-0.2px;"><span style="color:#2f2ff0">Run</span> the analysis. This may take some time.</div>
<div class="a" style="left:802px;top:432.5px;width:116.5px;height:19px;border:2px solid #e0101a;background:#e3f1fa;box-sizing:border-box;"></div>
<div class="a" style="left:808px;top:436.5px;font-size:7.5px;line-height:9px;white-space:nowrap;color:#3c3c48">Click this link to run an analysis</div>
<!-- buttons -->
<div class="a btn" style="left:795px;top:479px;width:34.5px;height:14px;">Exit</div>
<div class="a btn" style="left:870px;top:479px;width:40.5px;height:14px;">&lt;&lt; Back</div>
<div class="a" style="left:915px;top:479px;width:41px;height:14px;border-radius:2px;background:#9bd3f5;box-shadow:0 0 1px #6cc0f0;"></div>
<div class="a btn" style="left:916.5px;top:480.5px;width:38px;height:11px;border-color:#5a7c92;background:linear-gradient(#b8e2fa,#7fc6f0);line-height:10px;color:#2c3a48;">Next &gt;&gt;</div>
<div class="a" style="left:790px;top:496px;width:170px;height:3px;background:linear-gradient(#c8ccd0,#8a9096);"></div>
</body></html>
